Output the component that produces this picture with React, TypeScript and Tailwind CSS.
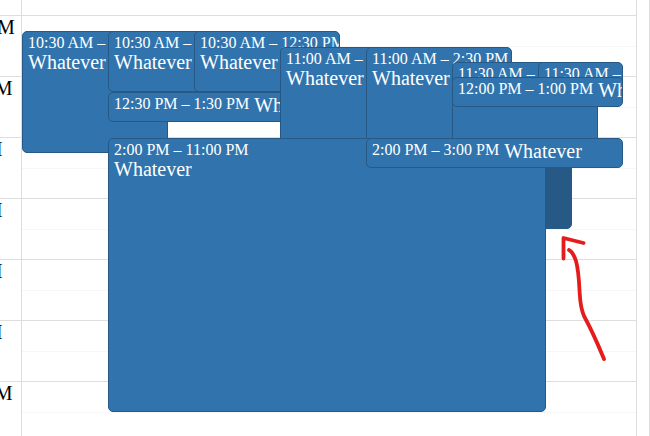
import React from "react";

type Ev = {
  l: number;
  t: number;
  w: number;
  h: number;
  label: string;
  title: string;
  short?: boolean;
  dark?: boolean;
};

const COL_LEFT = 22;

const events: Ev[] = [
  { l: 22, t: 31, w: 146, h: 122, label: "10:30 AM – 2:30 PM", title: "Whatever" },
  { l: 108, t: 31, w: 146, h: 61, label: "10:30 AM – 12:30 PM", title: "Whatever" },
  { l: 194, t: 31, w: 146, h: 61, label: "10:30 AM – 12:30 PM", title: "Whatever" },
  { l: 108, t: 92, w: 200, h: 30, label: "12:30 PM – 1:30 PM", title: "Whatever", short: true },
  { l: 280, t: 47, w: 146, h: 106, label: "11:00 AM – 2:30 PM", title: "Whatever" },
  { l: 366, t: 47, w: 146, h: 106, label: "11:00 AM – 2:30 PM", title: "Whatever" },
  { l: 452, t: 62, w: 146, h: 91, label: "11:30 AM – 2:30 PM", title: "Whatever" },
  { l: 538, t: 62, w: 85, h: 30, label: "11:30 AM – 12:30 PM", title: "Whatever", short: true },
  { l: 452, t: 77, w: 171, h: 30, label: "12:00 PM – 1:00 PM", title: "Whatever", short: true },
  { l: 366, t: 138, w: 206, h: 91, label: "2:00 PM – 5:00 PM", title: "Whatever", dark: true },
  { l: 108, t: 138, w: 438, h: 274, label: "2:00 PM – 11:00 PM", title: "Whatever" },
  { l: 366, t: 138, w: 257, h: 30, label: "2:00 PM – 3:00 PM", title: "Whatever", short: true },
];

const labels = ["10:00 AM", "12:00 PM", "2:00 PM", "4:00 PM", "6:00 PM", "8:00 PM", "10:00 PM"];

function Event({ e }: { e: Ev }) {
  return (
    <div
      className={`absolute flex overflow-hidden rounded-[5px] border border-[#265985] px-[5px] py-[2px] text-white ${
        e.short ? "flex-row items-start" : "flex-col items-start"
      } ${e.dark ? "bg-[#265985]" : "bg-[#3174ad]"}`}
      style={{ left: e.l - COL_LEFT, top: e.t, width: e.w, height: e.h }}
    >
      {!e.dark && (
        <>
          <div className="shrink-0 whitespace-nowrap pr-[5px] text-[16px] leading-[normal]">{e.label}</div>
          <div className="shrink-0 whitespace-nowrap text-[20px] leading-none">{e.title}</div>
        </>
      )}
    </div>
  );
}

export default function App() {
  return (
    <div
      className="relative flex h-[436px] w-[650px] overflow-hidden bg-white text-black"
      style={{ fontFamily: '"Liberation Serif", "Times New Roman", serif' }}
    >
      {/* time gutter */}
      <div className="flex w-[22px] shrink-0 flex-col overflow-hidden border-r border-[#ddd]">
        <div className="h-[15px] shrink-0" />
        {labels.map((lb) => (
          <div key={lb} className="h-[61px] shrink-0 border-t border-[#ddd]">
            <div className="ml-[-67px] whitespace-nowrap text-[20px] leading-[normal]">{lb}</div>
          </div>
        ))}
      </div>

      {/* day column */}
      <div className="relative flex flex-1 flex-col">
        <div className="h-[15px] shrink-0" />
        {labels.map((lb) => (
          <div key={lb} className="flex h-[61px] shrink-0 flex-col border-t border-[#ddd]">
            <div className="h-[30px] shrink-0" />
            <div className="h-[30px] shrink-0 border-t border-[#f7f7f7]" />
          </div>
        ))}
        {events.map((e, i) => (
          <Event key={i} e={e} />
        ))}
      </div>

      {/* right strip */}
      <div className="w-[14px] shrink-0 border-l border-r border-[#ddd]" />

      {/* annotation arrow */}
      <svg
        className="pointer-events-none absolute left-0 top-0"
        width="650"
        height="436"
        viewBox="0 0 650 436"
        fill="none"
      >
        <path
          d="M604 359 C597 342 590 327 584 316 C580 307 580 298 579.5 290 C579 280 578 268 576 261 C574 255 571 251 569 250"
          stroke="#e41c1c"
          strokeWidth="3.8"
          strokeLinecap="round"
          strokeLinejoin="round"
        />
        <path
          d="M563.5 258.5 L563.5 238 L583.5 243"
          stroke="#e41c1c"
          strokeWidth="3.8"
          strokeLinecap="round"
          strokeLinejoin="round"
        />
      </svg>
    </div>
  );
}
